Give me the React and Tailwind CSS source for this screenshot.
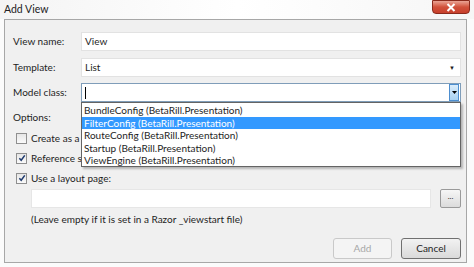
import React from 'react';

const font = { fontFamily: 'Lato, "Noto Sans", sans-serif' };

const Check = ({ checked }) => (
    <div className="w-[11px] h-[11px] border border-[#8f8f8f] bg-gradient-to-b from-[#e6e6e6] to-[#fafafa] flex items-center justify-center">
        {checked && (
            <svg width="8" height="8" viewBox="0 0 9 9">
                <path d="M1.5 4.8 L3.6 7 L7.6 1.5" fill="none" stroke="#1e3a6e" strokeWidth="1.7" />
            </svg>
        )}
    </div>
);

const items = [
    'BundleConfig (BetaRill.Presentation)',
    'FilterConfig (BetaRill.Presentation)',
    'RouteConfig (BetaRill.Presentation)',
    'Startup (BetaRill.Presentation)',
    'ViewEngine (BetaRill.Presentation)',
];

const App = () => {
    return (
        <div className="w-[474px] h-[267px] bg-[#fbfbfb] overflow-hidden text-[10px] text-[#1e1e1e] whitespace-nowrap" style={font}>
            {/* title bar */}
            <div className="h-[19px] flex justify-between bg-gradient-to-r from-[#f4f4f4] via-[#ffffff] to-[#f6f6f6]">
                <div className="pl-[4px] pt-[2px] text-[10.5px] leading-[14px] text-[#222]">Add View</div>
                <div className="mr-[4px] w-[38px] h-[14px] rounded-b-[4px] border border-[#8a2a1c] bg-gradient-to-b from-[#e9a394] via-[#d1513b] to-[#c8402c] flex items-center justify-center">
                    <svg width="10" height="9" viewBox="0 0 10 9">
                        <path d="M1.5 1 L8.5 8 M8.5 1 L1.5 8" stroke="#fff" strokeWidth="2" />
                    </svg>
                </div>
            </div>

            {/* panel */}
            <div className="relative ml-[4px] mr-[7px] h-[244px] border border-[#a7a7a7] bg-[#f0f0f0]">
                <div className="flex items-center mt-[12px] h-[19px]">
                    <div className="w-[76px] pl-[8px]">View name:</div>
                    <div className="flex-1 mr-[5px] h-[19px] bg-white border border-[#e2e2e2] pl-[3px] leading-[17px]">View</div>
                </div>
                <div className="flex items-center mt-[7px] h-[19px]">
                    <div className="w-[76px] pl-[8px]">Template:</div>
                    <div className="flex-1 mr-[5px] h-[19px] bg-white border border-[#e2e2e2] pl-[3px] leading-[17px] flex justify-between">
                        <span>List</span>
                        <span className="pr-[5px] text-[6px] leading-[17px]">▼</span>
                    </div>
                </div>
                <div className="flex items-center mt-[6px] h-[19px]">
                    <div className="w-[76px] pl-[8px]">Model class:</div>
                    <div className="flex-1 mr-[5px] h-[19px] bg-white border border-[#7f9db9] flex justify-between items-center">
                        <div className="ml-[3px] w-[1px] h-[12px] bg-black" />
                        <div className="w-[10px] h-[17px] mr-[1px] bg-gradient-to-b from-[#d9ecfb] to-[#a9d2f2] border border-[#4d8ecf] flex items-center justify-center">
                            <svg width="5" height="3" viewBox="0 0 5 3"><path d="M0 0 H5 L2.5 3 Z" fill="#000" /></svg>
                        </div>
                    </div>
                </div>

                <div className="mt-[6px] pl-[8px] h-[19px] leading-[19px]">Options:</div>
                <div className="mt-[2px] pl-[11px] flex items-center gap-[4px] h-[18px]">
                    <Check />
                    <span>Create as a partial view</span>
                </div>
                <div className="mt-[2px] pl-[11px] flex items-center gap-[4px] h-[18px]">
                    <Check checked />
                    <span>Reference script libraries</span>
                </div>
                <div className="mt-[2px] pl-[11px] flex items-center gap-[4px] h-[18px]">
                    <Check checked />
                    <span>Use a layout page:</span>
                </div>
                <div className="mt-[2px] pl-[26px] pr-[5px] flex items-center gap-[9px]">
                    <div className="flex-1 h-[19px] bg-white border border-[#e6e6e6]" />
                    <div className="w-[21px] h-[19px] rounded-[2px] border border-[#9a9a9a] bg-gradient-to-b from-[#f6f6f6] to-[#dcdcdc] text-[8px] leading-[12px] text-center">...</div>
                </div>
                <div className="mt-[3px] pl-[26px] h-[16px] leading-[16px]">(Leave empty if it is set in a Razor _viewstart file)</div>
                <div className="mt-[11px] flex justify-end gap-[9px] pr-[5px]">
                    <div className="w-[59px] h-[21px] rounded-[3px] border border-[#c9c9c9] bg-[#f4f4f4] text-[#a8a8a8] text-center leading-[19px]">Add</div>
                    <div className="w-[60px] h-[21px] rounded-[3px] border border-[#707070] bg-gradient-to-b from-[#f2f2f2] to-[#dadada] text-center leading-[19px]">Cancel</div>
                </div>

                {/* dropdown list overlay */}
                <div className="absolute left-[76px] top-[82px] w-[380px] h-[65px] bg-white border border-[#646464] shadow-[2px_2px_2px_rgba(0,0,0,0.25)] pt-[1px]">
                    {items.map((it, i) => (
                        <div
                            key={it}
                            className={i === 1 ? 'h-[12.5px] leading-[12.5px] pl-[2px] bg-[#3399ff] text-white' : 'h-[12.5px] leading-[12.5px] pl-[2px]'}
                        >
                            {it}
                        </div>
                    ))}
                </div>
            </div>
        </div>
    );
};

export default App;
